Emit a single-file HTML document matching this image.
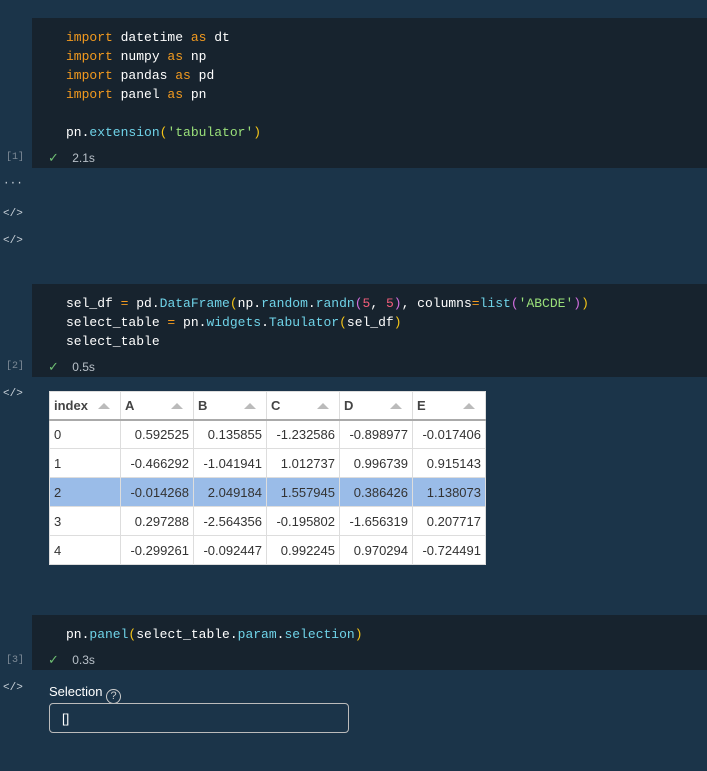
<!DOCTYPE html>
<html><head><style>
body{margin:0;width:707px;height:771px;background:#1b3449;position:relative;overflow:hidden;font-family:"Liberation Sans",sans-serif}
.cell{position:absolute;left:32px;width:675px;background:#17232e}
.code{position:absolute;left:66px;font-family:"Liberation Mono",monospace;font-size:13px;line-height:19px;color:#ffffff;white-space:pre;margin:0}
.k{color:#f29a1f}.f{color:#6fd3e8}.s{color:#9ae07a}.p{color:#f5c518}.n{color:#f35d7a}.pu{color:#d36ee0}
.st{position:absolute;font-size:12px;color:#b8c0c8}
.num{position:absolute;left:6px;font-family:"Liberation Mono",monospace;font-size:10px;color:#7d8a96}
.ic{position:absolute;left:3px;color:#c8d0d8;font-size:11px;font-family:"Liberation Mono",monospace}
table{position:absolute;left:49px;top:391px;border-collapse:collapse;background:#fff;font-size:13px;color:#333}
td,th{border:1px solid #ddd;padding:0 4px;height:28px;box-sizing:border-box}
th{text-align:left;font-weight:bold;border-bottom:2px solid #aaa;color:#444;position:relative}
th:after{content:"";position:absolute;right:10px;top:11px;border:6px solid transparent;border-top:0;border-bottom:6px solid #bbb}
td{text-align:right;height:29px}
td:first-child{text-align:left}
tr.sel td{background:#9abce8}
</style></head><body>
<div class="cell" style="top:18px;height:150px"></div>
<pre class="code" style="top:28px"><span class="k">import</span> datetime <span class="k">as</span> dt
<span class="k">import</span> numpy <span class="k">as</span> np
<span class="k">import</span> pandas <span class="k">as</span> pd
<span class="k">import</span> panel <span class="k">as</span> pn

pn.<span class="f">extension</span><span class="p">(</span><span class="s">'tabulator'</span><span class="p">)</span></pre>
<div class="num" style="top:152px">[1]</div>
<div class="st" style="left:48px;top:150px"><span style="color:#6fbf73;font-size:13px">✓</span>&nbsp;&nbsp;&nbsp;&nbsp;2.1s</div>
<div class="ic" style="top:178px">···</div>
<div class="ic" style="top:208px">&lt;/&gt;</div>
<div class="ic" style="top:235px">&lt;/&gt;</div>

<div class="cell" style="top:284px;height:93px"></div>
<pre class="code" style="top:294px">sel_df <span class="k">=</span> pd.<span class="f">DataFrame</span><span class="p">(</span>np.<span class="f">random</span>.<span class="f">randn</span><span class="pu">(</span><span class="n">5</span>, <span class="n">5</span><span class="pu">)</span>, columns<span class="k">=</span><span class="f">list</span><span class="pu">(</span><span class="s">'ABCDE'</span><span class="pu">)</span><span class="p">)</span>
select_table <span class="k">=</span> pn.<span class="f">widgets</span>.<span class="f">Tabulator</span><span class="p">(</span>sel_df<span class="p">)</span>
select_table</pre>
<div class="num" style="top:361px">[2]</div>
<div class="st" style="left:48px;top:359px"><span style="color:#6fbf73;font-size:13px">✓</span>&nbsp;&nbsp;&nbsp;&nbsp;0.5s</div>
<div class="ic" style="top:388px">&lt;/&gt;</div>

<table>
<tr><th style="width:71px">index</th><th style="width:73px">A</th><th style="width:73px">B</th><th style="width:73px">C</th><th style="width:73px">D</th><th style="width:73px">E</th></tr>
<tr><td>0</td><td>0.592525</td><td>0.135855</td><td>-1.232586</td><td>-0.898977</td><td>-0.017406</td></tr>
<tr><td>1</td><td>-0.466292</td><td>-1.041941</td><td>1.012737</td><td>0.996739</td><td>0.915143</td></tr>
<tr class="sel"><td>2</td><td>-0.014268</td><td>2.049184</td><td>1.557945</td><td>0.386426</td><td>1.138073</td></tr>
<tr><td>3</td><td>0.297288</td><td>-2.564356</td><td>-0.195802</td><td>-1.656319</td><td>0.207717</td></tr>
<tr><td>4</td><td>-0.299261</td><td>-0.092447</td><td>0.992245</td><td>0.970294</td><td>-0.724491</td></tr>
</table>

<div class="cell" style="top:615px;height:55px"></div>
<pre class="code" style="top:625px">pn.<span class="f">panel</span><span class="p">(</span>select_table.<span class="f">param</span>.<span class="f">selection</span><span class="p">)</span></pre>
<div class="num" style="top:655px">[3]</div>
<div class="st" style="left:48px;top:652px"><span style="color:#6fbf73;font-size:13px">✓</span>&nbsp;&nbsp;&nbsp;&nbsp;0.3s</div>
<div class="ic" style="top:682px">&lt;/&gt;</div>

<div style="position:absolute;left:49px;top:684px;font-size:13px;color:#fff">Selection <span style="display:inline-block;width:13px;height:13px;border:1.5px solid #ccc;border-radius:50%;font-size:11px;text-align:center;line-height:13px;color:#ccc;vertical-align:-3px">?</span></div>
<div style="position:absolute;left:49px;top:703px;width:300px;height:30px;border:1px solid #bbb;border-radius:4px;color:#fff;font-size:13px;line-height:29px;padding-left:12px;box-sizing:border-box">[]</div>
</body></html>
